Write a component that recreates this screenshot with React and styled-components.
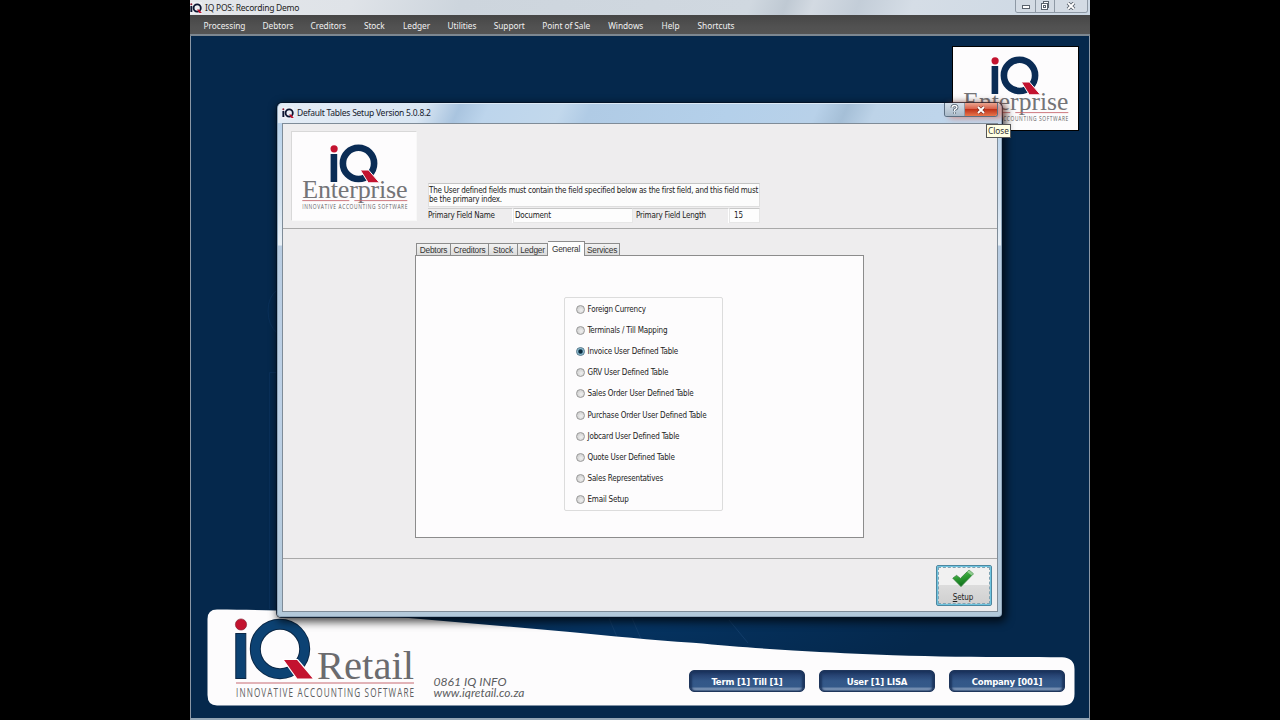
import React, { useState } from "react";
import styled, { createGlobalStyle, css } from "styled-components";

const tahoma = `"DejaVu Sans Condensed", "DejaVu Sans", sans-serif`;
const segoe = `"Noto Sans", "Open Sans", sans-serif`;

const GlobalStyle = createGlobalStyle`
    * {
        box-sizing: border-box;
    }
    body {
        margin: 0;
        background: #000;
        overflow: hidden;
    }
`;

const Screen = styled.div`
    width: 1280px;
    height: 720px;
    display: flex;
    justify-content: center;
    background: #000;
`;

const MainWindow = styled.div`
    position: relative;
    width: 900px;
    height: 720px;
    display: flex;
    flex-direction: column;
    background: #05284c;
`;

const TitleBar = styled.div`
    display: flex;
    align-items: center;
    flex: 0 0 15px;
    padding-right: 2px;
    font: 8.5px/15px ${segoe};
    color: #222;
    background: linear-gradient(
        110deg,
        #e3e6ea 0%,
        #dfe3e8 18%,
        #cdd5dd 30%,
        #d0d8e0 62%,
        #bfc9d3 66%,
        #d3dae2 69%,
        #c3cdd8 74%,
        #d5dde6 80%,
        #ccd8e4 100%
    );
`;

const TitleText = styled.span`
    margin-left: 3px;
    flex: 1;
    white-space: nowrap;
    letter-spacing: -0.24px;
`;

const WindowButtons = styled.div`
    display: flex;
    align-self: flex-start;
    height: 13px;
    border: 1px solid #8e99a5;
    border-top: 0;
    border-radius: 0 0 3px 3px;
    overflow: hidden;
`;

const WindowButton = styled.div`
    width: ${(props) => props.$width}px;
    display: flex;
    align-items: center;
    justify-content: center;
    background: ${(props) => props.$background || "#d3dbe4"};
    & + & {
        border-left: 1px solid #8e99a5;
    }
`;

const MenuBar = styled.div`
    display: flex;
    height: 21px;
    flex-shrink: 0;
    padding-left: 5px;
    background: linear-gradient(#464646, #515151 60%, #545454);
    border-bottom: 2px solid #7d8790;
`;

const MenuItem = styled.div`
    width: ${(props) => props.$width}px;
    text-align: center;
    white-space: nowrap;
    font: 8.3px/22px ${segoe};
    letter-spacing: -0.05px;
    color: #f0f0f0;
`;

const Desktop = styled.div`
    flex: 1;
    display: flex;
    flex-direction: column;
    justify-content: space-between;
    border: 1px solid #8b97a5;
    border-top: 0;
    border-bottom: 2px solid #93a5b5;
    padding: 10px 10px 12px 16px;
    background:
        radial-gradient(ellipse 300px 60px at 440px 590px, #053361, transparent),
        #05284c;
`;

const CornerLogo = styled.div`
    align-self: flex-end;
    width: 127px;
    height: 85px;
    border: 1px solid #000;
    background: #fdfcfd;
    overflow: hidden;
`;

const Banner = styled.div`
    position: relative;
    align-self: flex-start;
    width: 868px;
    height: 97px;
`;

const BannerShape = styled.svg`
    position: absolute;
    inset: 0;
    display: block;
    overflow: visible;
`;

const BannerContent = styled.div`
    position: relative;
    display: flex;
    height: 97px;
`;

const StatusGroup = styled.div`
    display: flex;
    gap: 14px;
    margin: 61px 0 0 132px;
`;

const StatusButton = styled.div`
    width: 116px;
    height: 22px;
    border: 1px solid #1f365c;
    border-radius: 5px;
    text-align: center;
    font: bold 9.5px/21px ${tahoma};
    letter-spacing: -0.2px;
    color: #fff;
    background: linear-gradient(
        #182f58 0%,
        #274473 22%,
        #335788 50%,
        #345989 78%,
        #8299b9 90%,
        #7089ac 100%
    );
    box-shadow:
        inset 2px 0 2px #1d3760,
        inset -2px 0 2px #1d3760;
`;

const Dialog = styled.div`
    position: absolute;
    left: 87px;
    top: 103px;
    width: 725px;
    height: 514px;
    display: flex;
    flex-direction: column;
    padding: 0 3px 4px 4px;
    border: 1px solid #8fa6ba;
    border-top-color: #dce9f5;
    border-radius: 5px 5px 4px 4px;
    background: linear-gradient(#b5d0ea 0, #d3e2f0 100px, #eaf1f7 141px, #b9cde2 142px, #bdd1e6 300px, #b3c9da 100%);
    box-shadow:
        0 0 0 1px rgba(3, 18, 36, 0.8),
        2px 3px 9px 2px rgba(0, 0, 0, 0.7);
`;

const DialogTitle = styled.div`
    display: flex;
    align-items: center;
    flex: 0 0 19px;
    margin: 0 -3px 0 -4px;
    padding: 0 3px 2px 4px;
    border-radius: 4px 4px 0 0;
    font: 8.5px/17px ${segoe};
    color: #16202c;
    background: linear-gradient(
        115deg,
        #e4ecf5 0%,
        #d9e6f3 20%,
        #a9c4df 25%,
        #bdd5ec 29%,
        #c2d8ec 39%,
        #b0cbe5 43%,
        #b4d0ea 62%,
        #b8d1e9 74%,
        #a5bfd7 78%,
        #bdd3e8 82%,
        #bfd7ee 100%
    );
`;

const DialogButtons = styled(WindowButtons)`
    height: 14px;
    margin-top: -1px;
    border-color: #5c6f82;
    box-shadow: 5px 1px 6px rgba(225, 90, 60, 0.6);
`;

const DialogBody = styled.div`
    flex: 1;
    display: flex;
    flex-direction: column;
    border: 1px solid #7f8c98;
    background: #eeedee;
    font: 8px/10px ${tahoma};
    letter-spacing: -0.19px;
    color: #222;
`;

const HeaderPanel = styled.div`
    flex: 0 0 105px;
    display: flex;
    padding: 7px 0 0 8px;
    border-bottom: 1px solid #a9a9a9;
`;

const LogoBox = styled.div`
    width: 126px;
    height: 90px;
    border: 1px solid #d8d8d8;
    border-right-color: #f8f8f8;
    border-bottom-color: #f8f8f8;
    background: #fdfcfd;
`;

const FieldArea = styled.div`
    width: 332px;
    margin: 52px 0 0 11px;
`;

const Description = styled.div`
    height: 24px;
    padding: 2px 0;
    border: 1px solid #dedede;
    border-top-color: #c4c4c4;
    line-height: 9px;
    letter-spacing: -0.235px;
    white-space: nowrap;
    background: #fcfcfc;
`;

const FieldRow = styled.div`
    display: flex;
    height: 15px;
    margin-top: 1px;
`;

const FieldLabel = styled.div`
    width: ${(props) => props.$width}px;
    padding-left: ${(props) => props.$indent || 0}px;
    line-height: 13px;
    white-space: nowrap;
    border-top: 1px solid #cfcfcf;
    border-right: 1px solid #fff;
`;

const FieldValue = styled.div`
    width: ${(props) => props.$width}px;
    padding-left: ${(props) => props.$indent}px;
    line-height: 14px;
    border: 1px solid #e6e6e6;
    border-top-color: #c8c8c8;
    background: #fdfdfd;
`;

const TabArea = styled.div`
    flex: 0 0 330px;
    padding: 12px 0 0 132px;
    border-bottom: 1px solid #a9a9a9;
`;

const TabStrip = styled.div`
    display: flex;
    align-items: flex-end;
    height: 14px;
    padding-left: 1px;
`;

const Tab = styled.button`
    width: ${(props) => props.$width}px;
    height: 12px;
    padding: 0;
    border: 1px solid #8c8c8c;
    border-left-width: ${(props) => (props.$first ? 1 : 0)}px;
    border-bottom: 0;
    background: linear-gradient(#f2f2f2, #dcdcdc);
    font: 8.3px/12px "Liberation Sans", sans-serif;
    letter-spacing: -0.2px;
    color: #333;
    text-align: center;
    white-space: nowrap;
    ${(props) =>
        props.$active &&
        css`
            height: 15px;
            margin-bottom: -1px;
            background: #fdfdfd;
            z-index: 1;
        `}
`;

const TabPanel = styled.div`
    width: 449px;
    height: 283px;
    padding: 41px 0 0 148px;
    border: 1px solid #8c8c8c;
    background: #fdfcfd;
`;

const OptionGroup = styled.div`
    width: 159px;
    height: 214px;
    padding: 1px 0 0 11px;
    border: 1px solid #dcdcdc;
    border-radius: 2px;
`;

const Option = styled.div`
    display: flex;
    align-items: center;
    gap: 2px;
    height: 21.1px;
    white-space: nowrap;
`;

const OptionLabel = styled.span`
    padding: 1px 0 0 0.5px;
`;

const Radio = styled.span`
    width: 9px;
    height: 9px;
    border: 1px solid ${(props) => (props.$checked ? "#4d7286" : "#999")};
    border-radius: 50%;
    background: ${(props) =>
        props.$checked
            ? "radial-gradient(circle, #0b2b3d 0 1.6px, #7fb4cb 2.8px, #d5e8ef 4px)"
            : "radial-gradient(circle at 60% 60%, #f0f0f0, #c4c4c4)"};
`;

const DialogFooter = styled.div`
    flex: 1;
    display: flex;
    justify-content: flex-end;
    padding: 6px 5px 0 0;
`;

const SetupButton = styled.button`
    width: 56px;
    height: 41px;
    display: flex;
    flex-direction: column;
    align-items: center;
    gap: 4px;
    padding: 3px 2px 0 0;
    border: 1px solid #4d87a0;
    border-radius: 2px;
    outline: 1px dashed #7fa3b3;
    outline-offset: -3px;
    box-shadow: inset 0 0 0 1px #6ec4e0;
    background: linear-gradient(#f1f1f1 0 48%, #dcdcdc 50%, #cfcfcf);
    font: 8px/10px ${tahoma};
    letter-spacing: -0.1px;
    color: #222;
`;

const Tooltip = styled.div`
    position: absolute;
    left: 796px;
    top: 124px;
    width: 25px;
    height: 14px;
    border: 1px solid #555;
    background: #ffffe4;
    font: 8.3px/12px ${segoe};
    text-align: center;
    color: #333;
`;

const menus = [
    { label: "Processing", width: 59 },
    { label: "Debtors", width: 48 },
    { label: "Creditors", width: 52.5 },
    { label: "Stock", width: 39.5 },
    { label: "Ledger", width: 45 },
    { label: "Utilities", width: 46 },
    { label: "Support", width: 48.5 },
    { label: "Point of Sale", width: 65.5 },
    { label: "Windows", width: 53.5 },
    { label: "Help", width: 36 },
    { label: "Shortcuts", width: 55 },
];

const tabs = [
    { label: "Debtors", width: 35 },
    { label: "Creditors", width: 38 },
    { label: "Stock", width: 29 },
    { label: "Ledger", width: 30 },
    { label: "General", width: 37 },
    { label: "Services", width: 35 },
];

const options = [
    "Foreign Currency",
    "Terminals / Till Mapping",
    "Invoice User Defined Table",
    "GRV User Defined Table",
    "Sales Order User Defined Table",
    "Purchase Order User Defined Table",
    "Jobcard User Defined Table",
    "Quote User Defined Table",
    "Sales Representatives",
    "Email Setup",
];

const statuses = ["Term [1] Till [1]", "User [1] LISA", "Company [001]"];

const AppIcon = () => (
    <svg width="12" height="12" viewBox="0 0 12 12">
        <rect width="12" height="12" fill="#f3f3f6" opacity="0.6" />
        <circle cx="1.3" cy="2.3" r="1" fill="#8d1a30" />
        <rect x="0.4" y="4" width="1.9" height="6" fill="#0b1430" />
        <circle cx="7.2" cy="6" r="3.6" fill="none" stroke="#0b1430" strokeWidth="1.8" />
        <path d="M7 7.5h2L11.8 11H9.4z" fill="#c3132f" />
    </svg>
);

const EnterpriseLogo = ({ top = -1 }) => (
    <svg width="124" height="83" viewBox={`-0.3 ${top} 124 83`}>
        <circle cx="41.8" cy="15.8" r="3.6" fill="#c3132f" />
        <rect x="38.3" y="21" width="6.6" height="28" fill="#0a2c55" />
        <circle cx="66.2" cy="30.4" r="15.6" fill="none" stroke="#0a2c55" strokeWidth="6.6" />
        <path d="M68 37h8.2l11 12.8H76z" fill="#c3132f" stroke="#fdfcfd" strokeWidth="1" />
        <text
            x="10"
            y="65"
            fontFamily="Liberation Serif, serif"
            fontSize="25"
            textLength="105"
            lengthAdjust="spacingAndGlyphs"
            fill="#747477"
        >
            Enterprise
        </text>
        <path d="M10 67.6H57M62 67.6H115" stroke="#c76a72" strokeWidth="0.9" />
        <g transform="translate(10 76.3) scale(0.7 1)">
            <text
                fontFamily="Open Sans, sans-serif"
                fontSize="7"
                textLength="150"
                lengthAdjust="spacing"
                fill="#5f5f63"
            >
                INNOVATIVE ACCOUNTING SOFTWARE
            </text>
        </g>
    </svg>
);

const RetailLogo = () => (
    <svg width="350" height="97" viewBox="207 609 350 97">
        <circle cx="241" cy="624.5" r="5.6" fill="#c3132f" stroke="#7b1a2c" strokeWidth="0.6" />
        <rect x="235.8" y="633.5" width="10" height="45" fill="#0c4273" stroke="#0a2746" />
        <circle cx="280" cy="649" r="24.7" fill="none" stroke="#0a2746" strokeWidth="11" />
        <circle cx="280" cy="649" r="24.7" fill="none" stroke="#0c4273" strokeWidth="9" />
        <path d="M283 659.5h14.5l16.5 19.5H297z" fill="#c3132f" stroke="#fff" strokeWidth="1.2" />
        <text
            x="317"
            y="678.5"
            fontFamily="Liberation Serif, serif"
            fontSize="41"
            textLength="97"
            lengthAdjust="spacingAndGlyphs"
            fill="#6b6b6e"
        >
            Retail
        </text>
        <path d="M236 683H414" stroke="#c76a72" />
        <g transform="translate(236 696.8) scale(0.68 1)">
            <text
                fontFamily="Open Sans, sans-serif"
                fontSize="12"
                textLength="262"
                lengthAdjust="spacing"
                fill="#5c5c60"
            >
                INNOVATIVE ACCOUNTING SOFTWARE
            </text>
        </g>
        <g fontFamily="Lato, sans-serif" fontStyle="italic" fontSize="12.3" fill="#5c5c60">
            <text x="433.5" y="685.6" textLength="73" lengthAdjust="spacingAndGlyphs">
                0861 IQ INFO
            </text>
            <text x="433.5" y="696.6" textLength="91" lengthAdjust="spacingAndGlyphs">
                www.iqretail.co.za
            </text>
        </g>
    </svg>
);

const CheckMark = () => (
    <svg width="22" height="20" viewBox="0 0 22 20">
        <defs>
            <linearGradient id="green" x1="0" y1="0" x2="0.3" y2="1">
                <stop offset="0" stopColor="#7fd07a" />
                <stop offset="0.5" stopColor="#2f9e33" />
                <stop offset="1" stopColor="#0f6f1c" />
            </linearGradient>
        </defs>
        <path
            d="M0.8 9.2L4.6 6.4L8.4 9.4L17 1L21.4 4.8L9 17.6Z"
            fill="url(#green)"
            stroke="#2c7d33"
            strokeWidth="0.8"
        />
        <path d="M15 2.8L17 1L21.4 4.8L19.6 6.6Z" fill="#c9e8c6" opacity="0.6" />
    </svg>
);

const App = () => {
    const [activeTab, setActiveTab] = useState("General");
    const [selected, setSelected] = useState("Invoice User Defined Table");

    return (
        <Screen>
            <GlobalStyle />
            <MainWindow>
                <TitleBar>
                    <AppIcon />
                    <TitleText>IQ POS: Recording Demo</TitleText>
                    <WindowButtons>
                        <WindowButton $width={19}>
                            <svg width="10" height="10">
                                <rect x="1.5" y="4.5" width="7" height="3" fill="#fff" stroke="#59626c" />
                            </svg>
                        </WindowButton>
                        <WindowButton $width={19}>
                            <svg width="10" height="10" fill="#fff" stroke="#59626c">
                                <rect x="3.5" y="0.5" width="5" height="6" />
                                <rect x="1.5" y="2.5" width="6" height="6" />
                                <rect x="3.5" y="4.5" width="2" height="2" />
                            </svg>
                        </WindowButton>
                        <WindowButton $width={33}>
                            <svg width="10" height="8">
                                <path d="M2 1L8 7M8 1L2 7" stroke="#59626c" strokeWidth="3.6" />
                                <path d="M2 1L8 7M8 1L2 7" stroke="#fff" strokeWidth="1.8" />
                            </svg>
                        </WindowButton>
                    </WindowButtons>
                </TitleBar>
                <MenuBar>
                    {menus.map((menu) => (
                        <MenuItem key={menu.label} $width={menu.width}>
                            {menu.label}
                        </MenuItem>
                    ))}
                </MenuBar>
                <Desktop>
                    <CornerLogo>
                        <EnterpriseLogo top={2} />
                    </CornerLogo>
                    <Banner>
                        <BannerShape width="868" height="97" viewBox="207 609 868 97">
                            <g fill="none" stroke="#0a3059">
                                <path d="M277 290Q268 297 268 311T277 333" />
                                <path d="M277 372.5H269.5V609" />
                                <path d="M609 618L617 637M632 618L641 639M729 620L748 643" stroke="#113c69" />
                            </g>
                            <path
                                d="M217 609.5C300 610 360 613.5 403 617.5L570 632C612 636 650 640 693 642.7C730 646 760 648.5 793 650.5C830 652.5 860 654 893 655.2C950 657 1000 657 1062 657.3Q1074.5 658 1074.5 669V694Q1074.5 705.5 1062 705.5H217Q207.5 705.5 207.5 695V619Q207.5 609.5 217 609.5Z"
                                fill="#fdfcfd"
                            />
                        </BannerShape>
                        <BannerContent>
                            <RetailLogo />
                            <StatusGroup>
                                {statuses.map((status) => (
                                    <StatusButton key={status}>{status}</StatusButton>
                                ))}
                            </StatusGroup>
                        </BannerContent>
                    </Banner>
                </Desktop>
                <Dialog>
                    <DialogTitle>
                        <AppIcon />
                        <TitleText>Default Tables Setup Version 5.0.8.2</TitleText>
                        <DialogButtons>
                            <WindowButton $width={19} $background="linear-gradient(#d5e0ea, #a9b9c8)">
                                <svg width="9" height="11" viewBox="0 0 9 11" fill="none">
                                    <path d="M2 3.8Q2 1.5 4.5 1.5T7 3.6Q7 4.9 4.5 5.8V7M4.5 8.2V9.8" stroke="#4d5c6c" strokeWidth="2.8" />
                                    <path d="M2 3.8Q2 1.5 4.5 1.5T7 3.6Q7 4.9 4.5 5.8V7M4.5 8.2V9.8" stroke="#fff" strokeWidth="1.3" />
                                </svg>
                            </WindowButton>
                            <WindowButton $width={33} $background="linear-gradient(#eaa48e 0, #d9604a 45%, #c0331a 50%, #e8764c 100%)">
                                <svg width="10" height="8">
                                    <path d="M2 1L8 7M8 1L2 7" stroke="#7a3024" strokeWidth="3.2" />
                                    <path d="M2 1L8 7M8 1L2 7" stroke="#fff" strokeWidth="1.9" />
                                </svg>
                            </WindowButton>
                        </DialogButtons>
                    </DialogTitle>
                    <DialogBody>
                        <HeaderPanel>
                            <LogoBox>
                                <EnterpriseLogo />
                            </LogoBox>
                            <FieldArea>
                                <Description>
                                    The User defined fields must contain the field specified below as the first field, and this field must
                                    <br />
                                    be the primary index.
                                </Description>
                                <FieldRow>
                                    <FieldLabel $width={85}>Primary Field Name</FieldLabel>
                                    <FieldValue $width={120} $indent={1}>
                                        Document
                                    </FieldValue>
                                    <FieldLabel $width={96} $indent={3}>
                                        Primary Field Length
                                    </FieldLabel>
                                    <FieldValue $width={31} $indent={4}>
                                        15
                                    </FieldValue>
                                </FieldRow>
                            </FieldArea>
                        </HeaderPanel>
                        <TabArea>
                            <TabStrip>
                                {tabs.map((tab, i) => (
                                    <Tab
                                        key={tab.label}
                                        $width={tab.width}
                                        $first={i === 0}
                                        $active={tab.label === activeTab}
                                        onClick={() => setActiveTab(tab.label)}
                                    >
                                        {tab.label}
                                    </Tab>
                                ))}
                            </TabStrip>
                            <TabPanel>
                                <OptionGroup>
                                    {options.map((option) => (
                                        <Option key={option} onClick={() => setSelected(option)}>
                                            <Radio $checked={option === selected} />
                                            <OptionLabel>{option}</OptionLabel>
                                        </Option>
                                    ))}
                                </OptionGroup>
                            </TabPanel>
                        </TabArea>
                        <DialogFooter>
                            <SetupButton>
                                <CheckMark />
                                <span>
                                    <u>S</u>etup
                                </span>
                            </SetupButton>
                        </DialogFooter>
                    </DialogBody>
                </Dialog>
                <Tooltip>Close</Tooltip>
            </MainWindow>
        </Screen>
    );
};

export default App;
